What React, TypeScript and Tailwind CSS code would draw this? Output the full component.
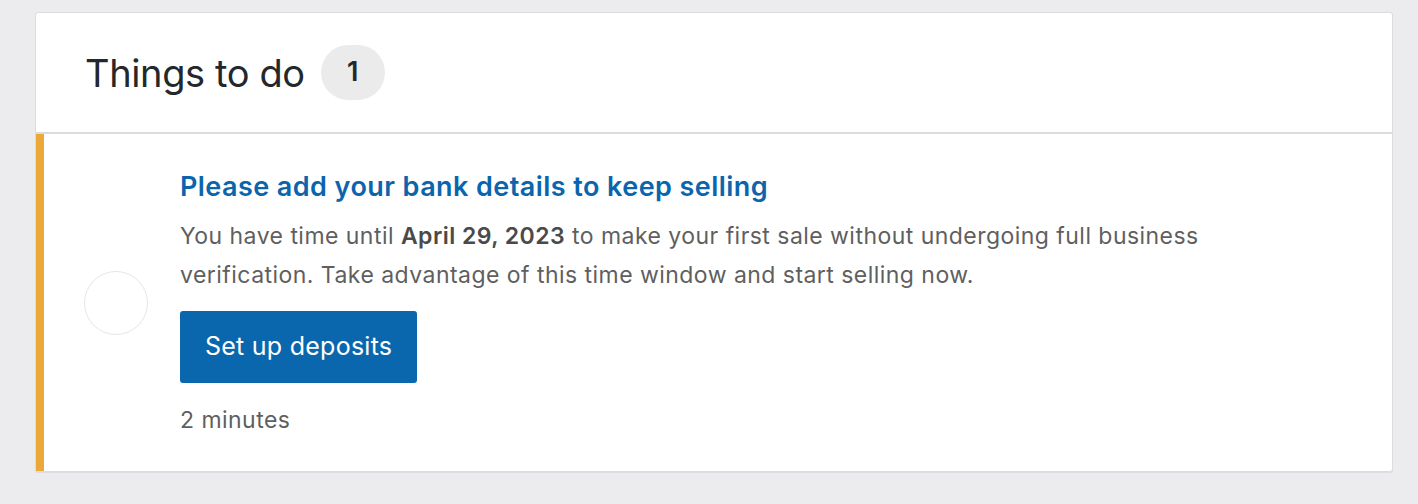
export default function App() {
  return (
    <div
      className="min-h-[504px] bg-[#ececee] pt-3 pl-[35px] pr-[25px]"
      style={{ fontFamily: "Inter, 'Noto Sans', sans-serif" }}
    >
      <div className="rounded-[3px] border border-[#dcdcde] bg-white shadow-[0_1px_0_#dcdcde]">
        <div className="flex h-[121px] items-center gap-4 border-b-2 border-[#dcdcde] pl-[49px]">
          <h2 className="text-[38px] leading-none font-normal tracking-[-0.01em] text-[#23282d]">Things to do</h2>
          <span className="flex h-[55px] w-[64px] items-center justify-center rounded-full bg-[#ebebeb] text-[27px] font-semibold text-[#23282d]">
            1
          </span>
        </div>
        <div className="flex items-center border-l-8 border-[#eba93a] pl-10">
          <div className="h-16 w-16 shrink-0 rounded-full border-[1.5px] border-[#e6e6e6]" />
          <div className="pl-8 pt-[37px] pb-[36px]">
            <h3 className="text-[27px] leading-[32px] font-semibold tracking-[0.016em] text-[#0a65ad]">
              Please add your bank details to keep selling
            </h3>
            <p className="mt-[14px] max-w-[1040px] text-[23px] leading-[39px] tracking-[0.02em] text-[#5f5f5f]">
              You have time until <strong className="font-semibold text-[#4a4a4a]">April 29, 2023</strong> to make your
              first sale without undergoing full business verification. Take advantage of this time window and start
              selling now.
            </p>
            <button className="mt-[16px] h-[72px] rounded-[3px] bg-[#0b67ad] px-[25px] text-[25px] tracking-[0.01em] text-white">
              Set up deposits
            </button>
            <div className="mt-[22px] text-[23px] leading-[30px] tracking-[0.02em] text-[#5f5f5f]">2 minutes</div>
          </div>
        </div>
      </div>
    </div>
  )
}
